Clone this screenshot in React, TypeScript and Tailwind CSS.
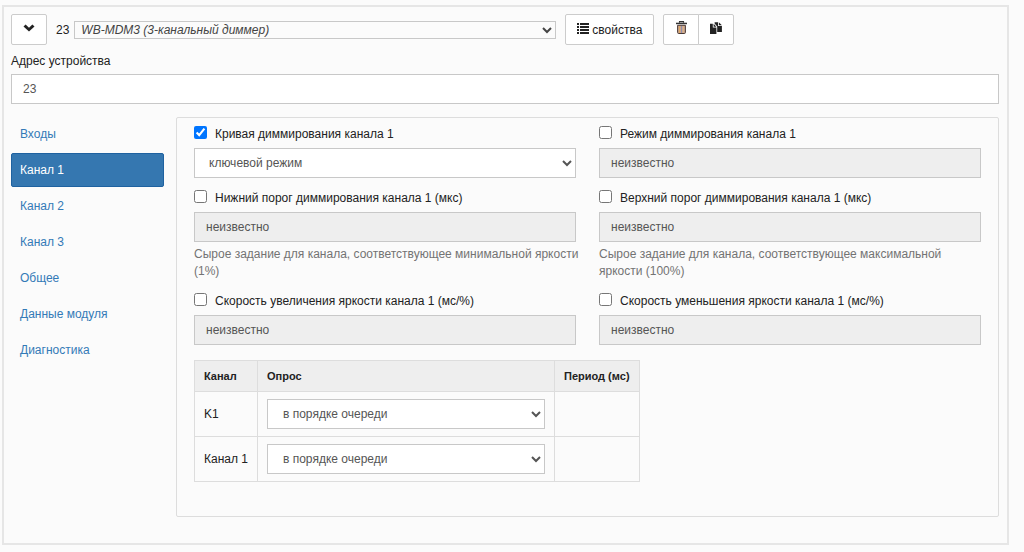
import { useState } from "react";

const tabs = ["Входы", "Канал 1", "Канал 2", "Канал 3", "Общее", "Данные модуля", "Диагностика"];

const pollRows = ["K1", "Канал 1"];

const control = "block h-[30px] w-full rounded-none border border-[#c8c8c8] text-[#555]";

function ChevronIcon() {
  return (
    <svg width="12" height="8" viewBox="0 0 12 8" className="-translate-y-0.5" aria-hidden="true">
      <path d="M.5 2.5 2.6.5 6 3.8 9.4.5l2.1 2L6 7.6z" fill="currentColor" />
    </svg>
  );
}

function ListIcon() {
  return (
    <svg width="12" height="11" viewBox="0 0 12 11" fill="currentColor" className="-translate-y-px" aria-hidden="true">
      <path d="M0 0h2v2H0zM3 0h9v2H3zM0 3h2v2H0zM3 3h9v2H3zM0 6h2v2H0zM3 6h9v2H3zM0 9h2v2H0zM3 9h9v2H3z" />
    </svg>
  );
}

function TrashIcon() {
  return (
    <svg width="11" height="13" viewBox="0 0 11 13" fill="none" className="-translate-y-0.5" aria-hidden="true">
      <path d="M3.5 1.8V.6h4v1.2" stroke="#333" strokeWidth="1.1" />
      <path d="M0 1.7h11v1.5H0z" fill="#333" />
      <path d="M1.6 4.3h7.8v7.2q0 1-1 1H2.6q-1 0-1-1z" fill="#c9a68e" stroke="#4a3a36" />
      <path d="M3.6 5v7" stroke="#e3a860" />
      <path d="M5.5 5v7" stroke="#8f8fae" />
      <path d="M7.4 5v7" stroke="#d8b08c" />
    </svg>
  );
}

function CopyIcon() {
  return (
    <svg width="12" height="12" viewBox="0 0 12 12" fill="#222" className="-translate-y-0.5" aria-hidden="true">
      <path d="M0 1.8h2.8v3.6h3.6V12H0z" />
      <path d="M3.6 1.8 6.4 4.7H3.6z" />
      <path d="M4.6.2H8v3.9h3.9v6H7.2V4.4L4.6 1.6z" />
      <path d="M8.8.2 11.9 3.3H8.8z" />
    </svg>
  );
}

type FieldProps = {
  id: string;
  label: string;
  help?: string;
  enabled?: boolean;
};

function Field({ id, label, help, enabled = false }: FieldProps) {
  const [checked, setChecked] = useState(enabled);
  return (
    <div>
      <div className="flex h-6 items-start gap-2">
        <input
          id={`${id}-on`}
          type="checkbox"
          checked={checked}
          onChange={(e) => setChecked(e.target.checked)}
          className="mt-0.5 size-[13px]"
        />
        <label htmlFor={`${id}-on`} className="leading-5">
          {label}
        </label>
      </div>
      {checked ? (
        <select aria-label={label} className={`${control} bg-white pl-2.5`}>
          <option>ключевой режим</option>
        </select>
      ) : (
        <input aria-label={label} disabled value="неизвестно" className={`${control} bg-[#eee] px-[11px]`} />
      )}
      {help && <p className="-mr-1.5 mt-1 mb-px leading-[17px] text-[#737373]">{help}</p>}
    </div>
  );
}

export default function App() {
  const [active, setActive] = useState("Канал 1");
  return (
    <div className="min-h-screen bg-[#fbfbfb] pt-[5px] pr-[15px] pb-2 pl-0.5 font-['Liberation_Sans',sans-serif] text-[12px] text-[#222]">
      <main className="border-2 border-[#e6e6e6] pt-[7px] pr-2 pb-[26px] pl-[7px]">
        <header className="flex items-center">
          <button
            aria-label="Свернуть"
            className="flex h-[31px] w-9 items-center justify-center rounded-[2px] border border-[#ccc] bg-white"
          >
            <ChevronIcon />
          </button>
          <label htmlFor="device" className="ml-[9px]">
            23
          </label>
          <select
            id="device"
            className="ml-[5px] h-[18px] w-[482px] rounded-none border border-[#c8c8c8] bg-[#fbfbfb] pl-0.5 text-[#444] italic"
          >
            <option>WB-MDM3 (3-канальный диммер)</option>
          </select>
          <button className="ml-[9px] flex h-[31px] items-center gap-[3px] rounded-[2px] border border-[#ccc] bg-white px-[11px]">
            <ListIcon />
            свойства
          </button>
          <div className="ml-[9px] flex">
            <button
              aria-label="Удалить"
              className="flex h-[31px] w-9 items-center justify-center rounded-l-[2px] border border-[#ccc] bg-white"
            >
              <TrashIcon />
            </button>
            <button
              aria-label="Копировать"
              className="-ml-px flex h-[31px] w-9 items-center justify-center rounded-r-[2px] border border-[#ccc] bg-white"
            >
              <CopyIcon />
            </button>
          </div>
        </header>

        <label htmlFor="address" className="mt-[6px] block leading-5">
          Адрес устройства
        </label>
        <input
          id="address"
          defaultValue="23"
          className="mt-[3px] block h-[30px] w-full border border-[#c8c8c8] bg-white px-[11px] text-[#555]"
        />

        <div className="mt-[13px] flex items-start gap-3">
          <nav className="flex w-[153px] shrink-0 flex-col gap-0.5">
            {tabs.map((tab) => (
              <a
                key={tab}
                href="#"
                onClick={() => setActive(tab)}
                className={
                  tab === active
                    ? "rounded-[2px] border border-[#1f62a0] bg-[#3577b0] px-2 leading-8 text-white"
                    : "border border-transparent px-2 leading-8 text-[#337ab7]"
                }
              >
                {tab}
              </a>
            ))}
          </nav>

          <section className="min-w-0 flex-1 rounded-[2px] border border-[#ddd] px-[17px] pt-[6px] pb-[34px]">
            <div className="grid grid-cols-2 gap-x-[23px] gap-y-2.5">
              <Field id="curve" label="Кривая диммирования канала 1" enabled />
              <Field id="mode" label="Режим диммирования канала 1" />
              <Field
                id="low"
                label="Нижний порог диммирования канала 1 (мкс)"
                help="Сырое задание для канала, соответствующее минимальной яркости (1%)"
              />
              <Field
                id="high"
                label="Верхний порог диммирования канала 1 (мкс)"
                help="Сырое задание для канала, соответствующее максимальной яркости (100%)"
              />
              <Field id="up" label="Скорость увеличения яркости канала 1 (мс/%)" />
              <Field id="down" label="Скорость уменьшения яркости канала 1 (мс/%)" />
            </div>

            <table className="mt-[15px] border-collapse text-left">
              <thead>
                <tr className="h-[31px] bg-[#eee] text-[11px]">
                  <th className="border border-[#ddd] px-[9px]">Канал</th>
                  <th className="border border-[#ddd] px-[9px]">Опрос</th>
                  <th className="border border-[#ddd] px-[9px]">Период (мс)</th>
                </tr>
              </thead>
              <tbody>
                {pollRows.map((name) => (
                  <tr key={name} className="h-[45px]">
                    <td className="border border-[#ddd] px-[9px]">{name}</td>
                    <td className="border border-[#ddd] px-[9px]">
                      <select
                        aria-label={`Опрос ${name}`}
                        className="block h-[30px] w-[278px] rounded-none border border-[#c8c8c8] bg-white pl-[11px] text-[#555]"
                      >
                        <option>в порядке очереди</option>
                      </select>
                    </td>
                    <td className="border border-[#ddd] px-[9px]" />
                  </tr>
                ))}
              </tbody>
            </table>
          </section>
        </div>
      </main>
    </div>
  );
}
